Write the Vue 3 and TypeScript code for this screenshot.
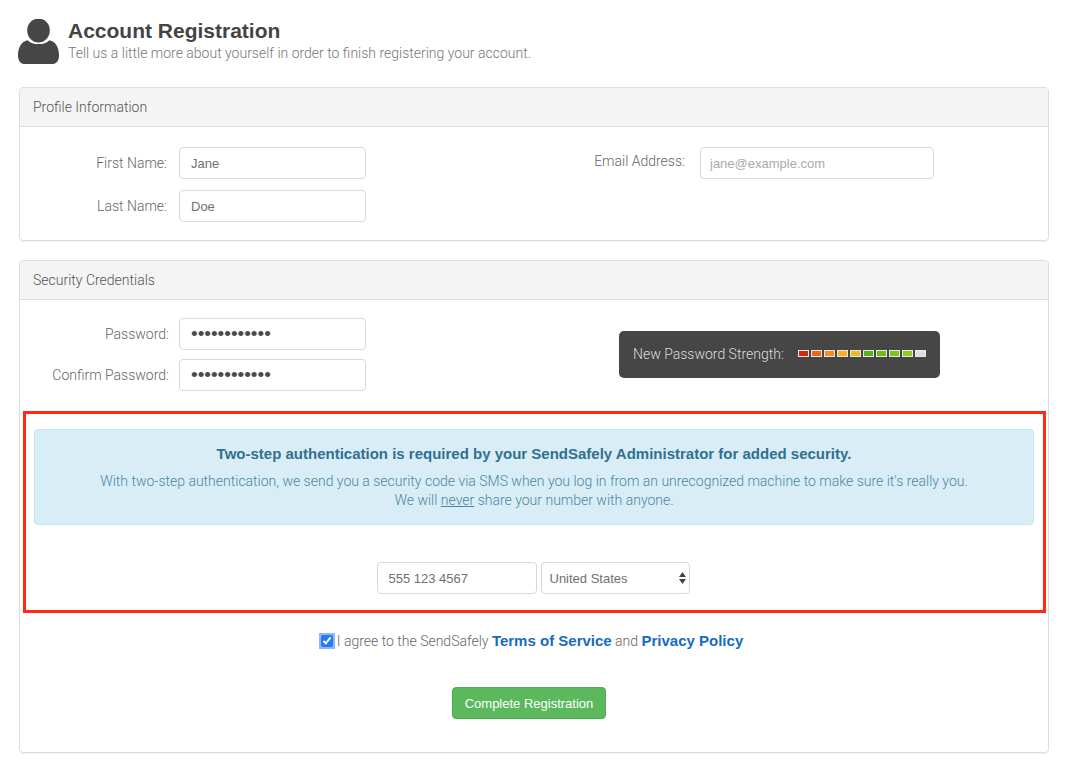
<script setup lang="ts">
import { ref } from 'vue'

const firstName = ref('Jane')
const lastName = ref('Doe')
const email = ref('jane@example.com')
const password = ref('Passw0rd1234')
const confirmPassword = ref('Passw0rd1234')
const phone = ref('555 123 4567')
const country = ref('United States')
const agreed = ref(true)

const strength: string[] = [
  'red', 'orange-red', 'orange', 'amber', 'yellow',
  'green', 'green-2', 'green-3', 'lime', 'empty',
]
</script>

<template>
  <main class="page">
    <header class="intro">
      <svg class="avatar" viewBox="0 0 41 45" aria-hidden="true">
        <path d="M9.600 21.200C3.400 22.300 0 28.600 0 36.400 0 41.600 2.600 45 7 45h27c4.400 0 7-3.400 7-8.600 0-7.800-3.400-14.100-9.600-15.200C29 23.700 25 25.100 20.500 25.100S12 23.700 9.600 21.200Z" />
        <ellipse cx="20.500" cy="11.500" rx="11.300" ry="12" />
      </svg>
      <div>
        <h1>Account Registration</h1>
        <p>Tell us a little more about yourself in order to finish registering your account.</p>
      </div>
    </header>

    <form @submit.prevent>
      <section class="panel">
        <h2>Profile Information</h2>
        <div class="columns profile">
          <div class="fields">
            <div class="field">
              <label for="first">First Name:</label>
              <input id="first" v-model="firstName" type="text" />
            </div>
            <div class="field">
              <label for="last">Last Name:</label>
              <input id="last" v-model="lastName" type="text" />
            </div>
          </div>
          <div class="field email">
            <label for="email">Email Address:</label>
            <input id="email" v-model="email" type="email" readonly />
          </div>
        </div>
      </section>

      <section class="panel">
        <h2>Security Credentials</h2>
        <div class="columns security">
          <div class="fields">
            <div class="field">
              <label for="pass">Password:</label>
              <input id="pass" v-model="password" type="password" />
            </div>
            <div class="field">
              <label for="confirm">Confirm Password:</label>
              <input id="confirm" v-model="confirmPassword" type="password" />
            </div>
          </div>
          <div class="strength">
            <span>New Password Strength:</span>
            <span class="meter">
              <i v-for="level in strength" :key="level" :class="level"></i>
            </span>
          </div>
        </div>

        <div class="two-step">
          <div class="notice">
            <strong>Two-step authentication is required by your SendSafely Administrator for added security.</strong>
            <p>
              With two-step authentication, we send you a security code via SMS when you log in from an unrecognized machine to make sure it's really you.<br />
              We will <u>never</u> share your number with anyone.
            </p>
          </div>
          <div class="phone">
            <input v-model="phone" type="tel" aria-label="Phone number" />
            <div class="select">
              <select v-model="country" aria-label="Country">
                <option>United States</option>
                <option>Canada</option>
                <option>United Kingdom</option>
              </select>
              <svg viewBox="0 0 7 12" aria-hidden="true">
                <path d="M0 5 3.500 0 7 5ZM0 7h7L3.500 12Z" />
              </svg>
            </div>
          </div>
        </div>

        <div class="agree">
          <input id="agree" v-model="agreed" type="checkbox" />
          <label for="agree">I agree to the SendSafely <a href="#terms">Terms of Service</a> and <a href="#privacy">Privacy Policy</a></label>
        </div>
        <div class="actions">
          <button type="submit">Complete Registration</button>
        </div>
      </section>
    </form>
  </main>
</template>

<style>
body {
  margin: 0;
  background: #fff;
}
</style>

<style scoped>
* {
  box-sizing: border-box;
}

.page {
  padding: 19px 18px 14px;
  font-family: Roboto, "Liberation Sans", sans-serif;
  font-size: 14px;
  font-weight: 300;
  line-height: 19px;
  color: #666;
}

.intro {
  display: flex;
  gap: 9px;
  margin-bottom: 23px;
}

.avatar {
  width: 41px;
  height: 45px;
  fill: #464646;
}

h1 {
  margin: 0 0 1px;
  font-family: "Liberation Sans", Arial, sans-serif;
  font-size: 21px;
  line-height: 24px;
  font-weight: 700;
  color: #444;
}

.intro p {
  margin: 0;
  color: #777;
}

form {
  margin-left: 1px;
}

.panel {
  border: 1px solid #ddd;
  border-radius: 4px;
  box-shadow: 0 1px 1px rgba(0, 0, 0, 0.05);
}

.panel + .panel {
  margin-top: 19px;
}

h2 {
  margin: 0;
  padding: 10px 13px 9px;
  font-size: 14px;
  line-height: 19px;
  font-weight: 300;
  color: #555;
  background: #f4f4f4;
  border-bottom: 1px solid #ddd;
  border-radius: 3px 3px 0 0;
}

.columns {
  display: grid;
  grid-template-columns: 1fr 1fr;
}

.profile {
  padding: 20px 0 18px;
}

.security {
  padding: 18px 0 20px;
}

.fields {
  display: grid;
  gap: 11px;
}

.security .fields {
  gap: 9px;
}

.field {
  display: grid;
  grid-template-columns: 147px 187px;
  gap: 12px;
  align-items: center;
  align-self: start;
}

.field label {
  text-align: right;
}

.security .field {
  grid-template-columns: 149px 187px;
  gap: 10px;
}

.email {
  grid-template-columns: 151px 234px;
  gap: 15px;
}

.email label {
  padding-bottom: 3px;
}

input,
select {
  width: 100%;
  height: 32px;
  margin: 0;
  padding: 0 11px;
  font-family: "Liberation Sans", Arial, sans-serif;
  font-size: 13px;
  color: #707070;
  background: #fff;
  border: 1px solid #d8d8d8;
  border-radius: 4px;
}

.email input {
  padding: 0 9px;
  color: #aaa;
}

input[type="password"] {
  font-size: 19px;
  color: #4a4a4a;
}

.strength {
  display: flex;
  align-items: center;
  justify-self: start;
  align-self: center;
  gap: 14px;
  height: 47px;
  margin-left: 85px;
  padding: 0 14px;
  color: #ddd;
  background: #464646;
  border-radius: 5px;
}

.meter {
  display: flex;
  gap: 2px;
  padding-bottom: 3px;
}

.meter i {
  width: 11px;
  height: 7px;
  border: 1px solid #e8e8e8;
}

.red { background: #d92508; }
.orange-red { background: #ed6516; }
.orange { background: #f98c1d; }
.amber { background: #fbae20; }
.yellow { background: #e6c01c; }
.green { background: #55b516; }
.green-2 { background: #6fbb18; }
.green-3 { background: #7fc41b; }
.lime { background: #8fce20; }
.empty { background: #dedede; }

.two-step {
  margin: 0 2px 0 3px;
  padding: 15px 9px 16px 8px;
  border: 3px solid #ff2a10;
}

.notice {
  padding: 14px 10px;
  text-align: center;
  color: #31708f;
  background: #d9edf7;
  border: 1px solid #bce8f1;
  border-radius: 4px;
}

.notice strong {
  display: block;
  margin-bottom: 9px;
  font-family: "Liberation Sans", Arial, sans-serif;
  font-size: 15px;
  font-weight: 700;
}

.notice p {
  margin: 0;
  color: #4a87a4;
}

.phone {
  display: flex;
  justify-content: center;
  gap: 4px;
  margin-top: 37px;
  padding-right: 2px;
}

.phone > input {
  width: 160px;
}

.select {
  position: relative;
  width: 149px;
}

select {
  padding: 0 8px;
  appearance: none;
}

.select svg {
  position: absolute;
  top: 10px;
  right: 4px;
  width: 7px;
  height: 12px;
  fill: #444;
  pointer-events: none;
}

.agree {
  display: flex;
  justify-content: center;
  align-items: center;
  gap: 4px;
  margin-top: 18px;
  padding-right: 4px;
}

.agree input {
  width: 12px;
  height: 12px;
  accent-color: #257af4;
  border-radius: 2px;
  box-shadow: 0 0 0 2px #8db8f8;
}

a {
  font-family: "Liberation Sans", Arial, sans-serif;
  font-size: 15px;
  font-weight: 700;
  color: #176bc1;
  text-decoration: none;
}

.actions {
  display: flex;
  justify-content: center;
  padding: 36px 10px 33px 0;
}

button {
  height: 32px;
  padding: 0 12px;
  font-family: "Liberation Sans", Arial, sans-serif;
  font-size: 13px;
  color: #fff;
  background: #5cb85c;
  border: 1px solid #4cae4c;
  border-radius: 4px;
}
</style>
